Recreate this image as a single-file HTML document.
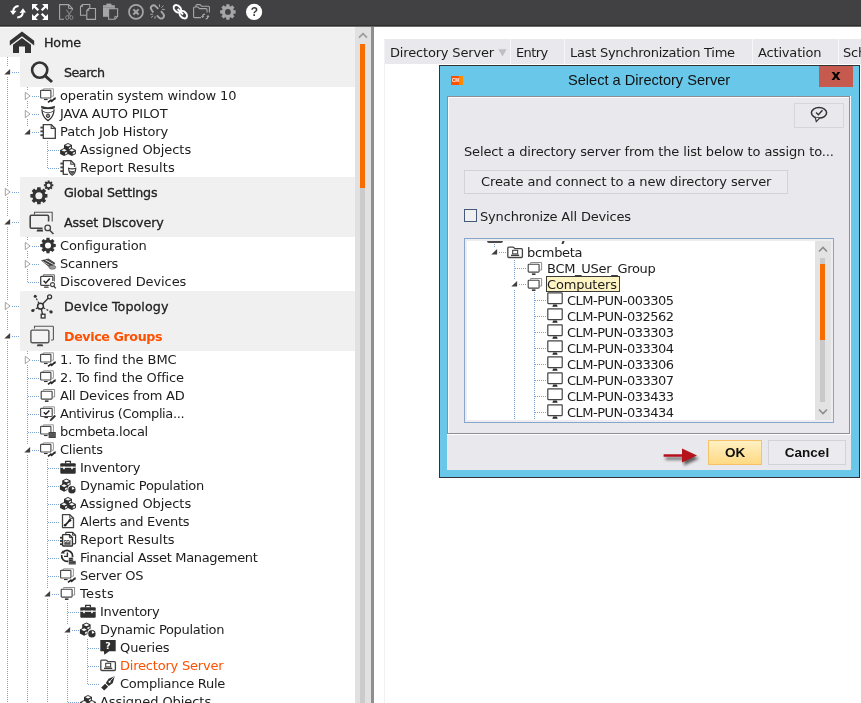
<!DOCTYPE html><html><head><meta charset="utf-8"><title>Select a Directory Server</title><style>
html,body{margin:0;padding:0}
body{width:861px;height:703px;position:relative;overflow:hidden;background:#fff;font-family:"DejaVu Sans","Liberation Sans",sans-serif;font-size:13px;color:#1e1e1e}
.a{position:absolute}
.t{position:absolute;white-space:nowrap;line-height:18px;height:18px;font-size:13px;letter-spacing:-0.17px;color:#1c1c1c}
.h{position:absolute;white-space:nowrap;line-height:30px;height:30px;font-size:12.7px;color:#222;-webkit-text-stroke:0.3px #222}
.h.or{font-weight:bold;-webkit-text-stroke:0;color:#fe5000}
.hb{position:absolute;left:20px;width:335px;height:30px;background:#f0f0f0}
.or{color:#fe5000}
.vl{position:absolute;width:1px;background:repeating-linear-gradient(to bottom,#7ba3cf 0,#7ba3cf 1px,transparent 1px,transparent 2px)}
.hl{position:absolute;height:1px;background:repeating-linear-gradient(to right,#7ba3cf 0,#7ba3cf 1px,transparent 1px,transparent 2px)}
svg{position:absolute;overflow:visible}
.tc{position:absolute;width:9px;height:10px;background:#fff}
</style></head><body><div id="root" style="position:absolute;left:0;top:0;width:861px;height:703px;will-change:transform">
<div class="a" style="left:0;top:0;width:861px;height:25px;background:#414143"></div>
<div class="a" style="left:0;top:25px;width:861px;height:1px;background:#2f2f31"></div>
<div class="a" style="left:0;top:26px;width:861px;height:1px;background:#6d6d6e"></div>
<div class="a" style="left:0;top:27px;width:355px;height:30px;background:#f0f0f0;border-top:1px solid #fafafa;box-sizing:border-box"></div>
<div class="hb" style="top:57px"></div>
<div class="hb" style="top:177px"></div>
<div class="hb" style="top:207px"></div>
<div class="hb" style="top:291px"></div>
<div class="hb" style="top:321px"></div>
<div class="a" style="left:355px;top:27px;width:16px;height:676px;background:#e1e1e1"></div>
<div class="a" style="left:360px;top:44px;width:5px;height:659px;background:#cbcbcb"></div>
<div class="a" style="left:360px;top:44px;width:5px;height:144px;background:#f86c00"></div>
<svg style="left:357px;top:31px" width="12" height="8" viewBox="0 0 12 8"><path d="M2 6.6L6 2.6L10 6.6" fill="none" stroke="#9a9a9a" stroke-width="1.6"/></svg>
<div class="a" style="left:371px;top:27px;width:3px;height:676px;background:#8f8f8f"></div>
<div class="h " style="left:44px;top:28px;letter-spacing:-0.166px">Home</div>
<div class="h " style="left:64px;top:58px;letter-spacing:-0.5px">Search</div>
<div class="h " style="left:64px;top:178px;letter-spacing:-0.215px">Global Settings</div>
<div class="h " style="left:64px;top:208px;letter-spacing:-0.114px">Asset Discovery</div>
<div class="h " style="left:64px;top:292px;letter-spacing:0.071px">Device Topology</div>
<div class="h or" style="left:64px;top:322px;letter-spacing:-0.401px">Device Groups</div>
<div class="vl" style="left:7px;top:57px;height:646px"></div>
<div class="hl" style="top:72px;left:12px;width:7px"></div>
<div class="tc" style="left:3px;top:67px"></div>
<svg style="left:3px;top:67px" width="9" height="10" viewBox="0 0 9 10"><path d="M1.3 7.5H7.1V2.1Z" fill="#3e3e3e"/></svg>
<div class="hl" style="top:192px;left:12px;width:7px"></div>
<div class="tc" style="left:3px;top:187px"></div>
<svg style="left:3px;top:187px" width="9" height="10" viewBox="0 0 9 10"><path d="M2.3 1.3L7.1 5L2.3 8.7Z" fill="#fff" stroke="#a2a2a2" stroke-width="1"/></svg>
<div class="hl" style="top:222px;left:12px;width:7px"></div>
<div class="tc" style="left:3px;top:217px"></div>
<svg style="left:3px;top:217px" width="9" height="10" viewBox="0 0 9 10"><path d="M1.3 7.5H7.1V2.1Z" fill="#3e3e3e"/></svg>
<div class="hl" style="top:306px;left:12px;width:7px"></div>
<div class="tc" style="left:3px;top:301px"></div>
<svg style="left:3px;top:301px" width="9" height="10" viewBox="0 0 9 10"><path d="M2.3 1.3L7.1 5L2.3 8.7Z" fill="#fff" stroke="#a2a2a2" stroke-width="1"/></svg>
<div class="hl" style="top:336px;left:12px;width:7px"></div>
<div class="tc" style="left:3px;top:331px"></div>
<svg style="left:3px;top:331px" width="9" height="10" viewBox="0 0 9 10"><path d="M1.3 7.5H7.1V2.1Z" fill="#3e3e3e"/></svg>
<div class="vl" style="left:27px;top:87px;height:46px"></div>
<div class="vl" style="left:47px;top:141px;height:28px"></div>
<div class="vl" style="left:27px;top:237px;height:46px"></div>
<div class="vl" style="left:27px;top:351px;height:352px"></div>
<div class="vl" style="left:47px;top:459px;height:244px"></div>
<div class="vl" style="left:67px;top:603px;height:100px"></div>
<div class="vl" style="left:87px;top:639px;height:46px"></div>
<div class="hl" style="top:96px;left:32px;width:8px"></div>
<div class="tc" style="left:23px;top:91px"></div>
<svg style="left:23px;top:91px" width="9" height="10" viewBox="0 0 9 10"><path d="M2.3 1.3L7.1 5L2.3 8.7Z" fill="#fff" stroke="#a2a2a2" stroke-width="1"/></svg>
<svg style="left:40px;top:88px" width="16" height="16" viewBox="0 0 16 16"><path d="M3.5 1.8V0.8H13.4V8.2H11.6" fill="none" stroke="#9a9a9a" stroke-width="1"/><path d="M2.5 2V1.4" fill="none" stroke="#bbb" stroke-width="1"/><rect x="0.6" y="2.4" width="10.3" height="7.6" rx="0.7" fill="#fff" stroke="#4a4a4a" stroke-width="1.15"/><rect x="4" y="11" width="3.6" height="1.1" fill="#333"/><path d="M8 14.4L10.9 12.1L11.7 13.2L14.6 10.6" fill="none" stroke="#222" stroke-width="1.7"/><path d="M15.9 9.3L15.4 12L13.3 9.9Z" fill="#222"/></svg>
<div class="t " style="left:60px;top:87px;letter-spacing:-0.137px">operatin system window 10</div>
<div class="hl" style="top:114px;left:32px;width:8px"></div>
<div class="tc" style="left:23px;top:109px"></div>
<svg style="left:23px;top:109px" width="9" height="10" viewBox="0 0 9 10"><path d="M2.3 1.3L7.1 5L2.3 8.7Z" fill="#fff" stroke="#a2a2a2" stroke-width="1"/></svg>
<svg style="left:40px;top:106px" width="16" height="16" viewBox="0 0 16 16"><path d="M1.1 -0.3Q8 2.6 14.9 -0.3L14.7 2.3Q8 5.4 1.3 2.3Z" fill="#333"/><path d="M1.9 3.2Q2.2 11 8 14.6Q13.8 11 14.1 3.2" fill="#fff" stroke="#333" stroke-width="1.3"/><path d="M2.6 5.2Q8 8.4 13.4 5.2" fill="none" stroke="#555" stroke-width="1"/><circle cx="8" cy="9.8" r="1.7" fill="#999" stroke="#333" stroke-width="1"/></svg>
<div class="t " style="left:60px;top:105px;letter-spacing:-0.178px">JAVA AUTO PILOT</div>
<div class="hl" style="top:132px;left:32px;width:8px"></div>
<div class="tc" style="left:23px;top:127px"></div>
<svg style="left:23px;top:127px" width="9" height="10" viewBox="0 0 9 10"><path d="M1.3 7.5H7.1V2.1Z" fill="#3e3e3e"/></svg>
<svg style="left:40px;top:124px" width="16" height="16" viewBox="0 0 16 16"><path d="M3.3 0.6H11.2L15.3 4.4V14.4H3.3Z" fill="#fff" stroke="#444" stroke-width="1.4" stroke-linejoin="round"/><path d="M11.2 0.6V4.4H15.3" fill="none" stroke="#444" stroke-width="1.1"/><rect x="0.4" y="2.6" width="2.6" height="1.9" fill="#444"/><rect x="0.4" y="6.4" width="2.6" height="1.9" fill="#444"/><rect x="0.4" y="10.2" width="2.6" height="1.9" fill="#444"/></svg>
<div class="t " style="left:60px;top:123px;letter-spacing:-0.125px">Patch Job History</div>
<div class="hl" style="top:150px;left:48px;width:12px"></div>
<svg style="left:60px;top:142px" width="16" height="16" viewBox="0 0 16 16"><path d="M8 0.8999999999999999L12.0 2.9V6.9L8 8.899999999999999L4.0 6.9V2.9Z" fill="#2f2f2f"/><path d="M8 1.9L10.7 3.1999999999999997L8 4.5L5.3 3.1999999999999997Z" fill="#fff"/><path d="M8.9 5.7L11.1 4.6V6.3L8.9 7.5Z" fill="#e8e8e8"/><path d="M4.1 6.0L8.1 8.0V12.0L4.1 14.0L0.09999999999999964 12.0V8.0Z" fill="#2f2f2f"/><path d="M4.1 7.0L6.8 8.3L4.1 9.6L1.3999999999999995 8.3Z" fill="#fff"/><path d="M5.0 10.8L7.199999999999999 9.700000000000001V11.4L5.0 12.600000000000001Z" fill="#e8e8e8"/><path d="M11.9 6.0L15.9 8.0V12.0L11.9 14.0L7.9 12.0V8.0Z" fill="#2f2f2f"/><path d="M11.9 7.0L14.600000000000001 8.3L11.9 9.6L9.2 8.3Z" fill="#fff"/><path d="M12.8 10.8L15.0 9.700000000000001V11.4L12.8 12.600000000000001Z" fill="#e8e8e8"/></svg>
<div class="t " style="left:80px;top:141px;letter-spacing:-0.057px">Assigned Objects</div>
<div class="hl" style="top:168px;left:48px;width:12px"></div>
<svg style="left:60px;top:160px" width="16" height="16" viewBox="0 0 16 16"><path d="M8 14.4H3.3V0.6H10.8L14.6 4.2V7" fill="#fff" stroke="#444" stroke-width="1.4" stroke-linejoin="round"/><path d="M10.8 0.6V4.2H14.6" fill="none" stroke="#444" stroke-width="1.1"/><rect x="0.4" y="2.6" width="2.6" height="1.9" fill="#444"/><rect x="0.4" y="6.4" width="2.6" height="1.9" fill="#444"/><rect x="0.4" y="10.2" width="2.6" height="1.9" fill="#444"/><path d="M8.6 8.2Q12.2 9.6 15.8 8.2Q15.6 13.4 12.2 15.2Q8.8 13.4 8.6 8.2Z" fill="#fff" stroke="#333" stroke-width="1.1"/><path d="M9.6 10.4Q12.2 11.4 14.8 10.4Q14.4 13 12.2 14.2Q10 13 9.6 10.4Z" fill="#555"/></svg>
<div class="t " style="left:80px;top:159px;letter-spacing:0.037px">Report Results</div>
<div class="hl" style="top:246px;left:32px;width:8px"></div>
<div class="tc" style="left:23px;top:241px"></div>
<svg style="left:23px;top:241px" width="9" height="10" viewBox="0 0 9 10"><path d="M2.3 1.3L7.1 5L2.3 8.7Z" fill="#fff" stroke="#a2a2a2" stroke-width="1"/></svg>
<svg style="left:40px;top:238px" width="16" height="16" viewBox="0 0 16 16"><path fill-rule="evenodd" fill="#333" d="M13.74 5.76 L15.75 5.96 L15.75 9.04 L13.74 9.24 L13.29 10.33 L14.57 11.89 L12.39 14.07 L10.83 12.79 L9.74 13.24 L9.54 15.25 L6.46 15.25 L6.26 13.24 L5.17 12.79 L3.61 14.07 L1.43 11.89 L2.71 10.33 L2.26 9.24 L0.25 9.04 L0.25 5.96 L2.26 5.76 L2.71 4.67 L1.43 3.11 L3.61 0.93 L5.17 2.21 L6.26 1.76 L6.46 -0.25 L9.54 -0.25 L9.74 1.76 L10.83 2.21 L12.39 0.93 L14.57 3.11 L13.29 4.67Z M11.00 7.50 A3.0 3.0 0 1 0 5.00 7.50 A3.0 3.0 0 1 0 11.00 7.50Z"/></svg>
<div class="t " style="left:60px;top:237px;letter-spacing:-0.122px">Configuration</div>
<div class="hl" style="top:264px;left:32px;width:8px"></div>
<div class="tc" style="left:23px;top:259px"></div>
<svg style="left:23px;top:259px" width="9" height="10" viewBox="0 0 9 10"><path d="M2.3 1.3L7.1 5L2.3 8.7Z" fill="#fff" stroke="#a2a2a2" stroke-width="1"/></svg>
<svg style="left:40px;top:256px" width="16" height="16" viewBox="0 0 16 16"><g transform="translate(0,2.4)"><path d="M1 2.2L4.2 1L13.6 6.2L12.6 8.2L9 8.6Z" fill="#3a3a3a"/><path d="M4.6 0.8L8.6 0.2L15.2 4.6L14.4 6.4Z" fill="#4a4a4a"/><path d="M2.4 2.8L9.4 6.8M5.6 1.8L12.8 5.8" stroke="#ddd" stroke-width="0.8"/><ellipse cx="12.4" cy="8.9" rx="3.4" ry="1.9" fill="#999" stroke="#666" stroke-width="0.8"/></g></svg>
<div class="t " style="left:60px;top:255px;letter-spacing:-0.229px">Scanners</div>
<div class="hl" style="top:282px;left:28px;width:12px"></div>
<svg style="left:40px;top:274px" width="16" height="16" viewBox="0 0 16 16"><path d="M3.4 2V0.8H14.4V7.6" fill="none" stroke="#666" stroke-width="1"/><path d="M12.9 7V3.2Q12.9 2.4 12.1 2.4H1.5Q0.7 2.4 0.7 3.2V10.6Q0.7 11.4 1.5 11.4H9.6" fill="#fff" stroke="#444" stroke-width="1.3"/><path d="M3.6 6.8L5.8 9L9.8 4.6" fill="none" stroke="#222" stroke-width="1.5"/><path d="M4.4 12.6H8.2L8.8 13.8H3.8Z" fill="#333"/><circle cx="12.5" cy="10.6" r="2" fill="#fff" stroke="#444" stroke-width="1.1"/><path d="M13.9 12.2L15.8 14.4" stroke="#444" stroke-width="1.4"/></svg>
<div class="t " style="left:60px;top:273px;letter-spacing:-0.091px">Discovered Devices</div>
<div class="hl" style="top:360px;left:32px;width:8px"></div>
<div class="tc" style="left:23px;top:355px"></div>
<svg style="left:23px;top:355px" width="9" height="10" viewBox="0 0 9 10"><path d="M2.3 1.3L7.1 5L2.3 8.7Z" fill="#fff" stroke="#a2a2a2" stroke-width="1"/></svg>
<svg style="left:40px;top:352px" width="16" height="16" viewBox="0 0 16 16"><path d="M3.5 1.8V0.8H13.4V8.2H11.6" fill="none" stroke="#9a9a9a" stroke-width="1"/><path d="M2.5 2V1.4" fill="none" stroke="#bbb" stroke-width="1"/><rect x="0.6" y="2.4" width="10.3" height="7.6" rx="0.7" fill="#fff" stroke="#4a4a4a" stroke-width="1.15"/><rect x="4" y="11" width="3.6" height="1.1" fill="#333"/><path d="M8 14.4L10.9 12.1L11.7 13.2L14.6 10.6" fill="none" stroke="#222" stroke-width="1.7"/><path d="M15.9 9.3L15.4 12L13.3 9.9Z" fill="#222"/></svg>
<div class="t " style="left:60px;top:351px;letter-spacing:-0.073px">1. To find the BMC</div>
<div class="hl" style="top:378px;left:28px;width:12px"></div>
<svg style="left:40px;top:370px" width="16" height="16" viewBox="0 0 16 16"><path d="M3.5 1.8V0.8H13.4V8.2H11.6" fill="none" stroke="#9a9a9a" stroke-width="1"/><path d="M2.5 2V1.4" fill="none" stroke="#bbb" stroke-width="1"/><rect x="0.6" y="2.4" width="10.3" height="7.6" rx="0.7" fill="#fff" stroke="#4a4a4a" stroke-width="1.15"/><rect x="4" y="11" width="3.6" height="1.1" fill="#333"/><path d="M8 14.4L10.9 12.1L11.7 13.2L14.6 10.6" fill="none" stroke="#222" stroke-width="1.7"/><path d="M15.9 9.3L15.4 12L13.3 9.9Z" fill="#222"/></svg>
<div class="t " style="left:60px;top:369px;letter-spacing:-0.135px">2. To find the Office</div>
<div class="hl" style="top:396px;left:28px;width:12px"></div>
<svg style="left:40px;top:388px" width="16" height="16" viewBox="0 0 16 16"><path d="M3.6 2.6V1.5H14.6V9H13" fill="none" stroke="#8c8c8c" stroke-width="1"/><rect x="1.2" y="3.2" width="10.9" height="7.9" rx="0.8" fill="#fff" stroke="#444" stroke-width="1.15"/><rect x="4.9" y="12.4" width="3.6" height="1.5" fill="#2a2a2a"/></svg>
<div class="t " style="left:60px;top:387px;letter-spacing:-0.228px">All Devices from AD</div>
<div class="hl" style="top:414px;left:28px;width:12px"></div>
<svg style="left:40px;top:406px" width="16" height="16" viewBox="0 0 16 16"><path d="M3.5 1.8V0.8H14.4V8" fill="none" stroke="#9a9a9a" stroke-width="1"/><rect x="0.6" y="2.3" width="11.6" height="8.2" rx="0.8" fill="#fff" stroke="#4f4f4f" stroke-width="1.2"/><path d="M3.8 6.2L5.8 8.2L9.4 4.4" fill="none" stroke="#222" stroke-width="1.5"/><rect x="4.4" y="11" width="3.6" height="1.1" fill="#333"/><path d="M14.6 8.8L16 10.2L11.8 14.4L9.6 15.2L10.4 13Z" fill="#333"/></svg>
<div class="t " style="left:60px;top:405px;letter-spacing:-0.385px">Antivirus (Complia...</div>
<div class="hl" style="top:432px;left:28px;width:12px"></div>
<svg style="left:40px;top:424px" width="16" height="16" viewBox="0 0 16 16"><path d="M3.5 1.8V0.8H13.4V8" fill="none" stroke="#9a9a9a" stroke-width="1"/><rect x="0.6" y="2.4" width="10.3" height="7.6" rx="0.7" fill="#fff" stroke="#4a4a4a" stroke-width="1.15"/><rect x="4" y="11" width="3.6" height="1.1" fill="#333"/><rect x="8.6" y="8" width="7.2" height="6" fill="#444"/><path d="M9.4 10H15M9.4 12H15" stroke="#777" stroke-width="0.7"/></svg>
<div class="t " style="left:60px;top:423px;letter-spacing:-0.302px">bcmbeta.local</div>
<div class="hl" style="top:450px;left:32px;width:8px"></div>
<div class="tc" style="left:23px;top:445px"></div>
<svg style="left:23px;top:445px" width="9" height="10" viewBox="0 0 9 10"><path d="M1.3 7.5H7.1V2.1Z" fill="#3e3e3e"/></svg>
<svg style="left:40px;top:442px" width="16" height="16" viewBox="0 0 16 16"><path d="M3.5 1.8V0.8H13.4V8.2H11.6" fill="none" stroke="#9a9a9a" stroke-width="1"/><path d="M2.5 2V1.4" fill="none" stroke="#bbb" stroke-width="1"/><rect x="0.6" y="2.4" width="10.3" height="7.6" rx="0.7" fill="#fff" stroke="#4a4a4a" stroke-width="1.15"/><rect x="4" y="11" width="3.6" height="1.1" fill="#333"/><path d="M8 14.4L10.9 12.1L11.7 13.2L14.6 10.6" fill="none" stroke="#222" stroke-width="1.7"/><path d="M15.9 9.3L15.4 12L13.3 9.9Z" fill="#222"/></svg>
<div class="t " style="left:60px;top:441px;letter-spacing:-0.235px">Clients</div>
<div class="hl" style="top:468px;left:48px;width:12px"></div>
<svg style="left:60px;top:460px" width="16" height="16" viewBox="0 0 16 16"><path d="M5.6 3.4V1.4H10.4V3.4" fill="none" stroke="#333" stroke-width="1.3"/><rect x="0.3" y="3.2" width="15.4" height="10.6" rx="1" fill="#2f2f2f"/><rect x="0.3" y="6.6" width="15.4" height="1.2" fill="#fff"/><rect x="3.2" y="6.6" width="1.6" height="2.6" fill="#fff"/><rect x="11.2" y="6.6" width="1.6" height="2.6" fill="#fff"/></svg>
<div class="t " style="left:80px;top:459px;letter-spacing:-0.22px">Inventory</div>
<div class="hl" style="top:486px;left:48px;width:12px"></div>
<svg style="left:60px;top:478px" width="16" height="16" viewBox="0 0 16 16"><path d="M6.4 0.5049999999999999L10.600000000000001 2.6049999999999995V6.805L6.4 8.905L2.2 6.805V2.6049999999999995Z" fill="#2f2f2f"/><path d="M6.4 1.5549999999999997L9.235000000000001 2.9199999999999995L6.4 4.284999999999999L3.565 2.9199999999999995Z" fill="#fff"/><path d="M7.345000000000001 5.545L9.655000000000001 4.39V6.175L7.345000000000001 7.4350000000000005Z" fill="#e8e8e8"/><path d="M4.1 5.305000000000001L8.3 7.405V11.605L4.1 13.705L-0.10000000000000053 11.605V7.405Z" fill="#2f2f2f"/><path d="M4.1 6.355L6.9350000000000005 7.720000000000001L4.1 9.085L1.2649999999999992 7.720000000000001Z" fill="#fff"/><path d="M5.045 10.345L7.355 9.19V10.975000000000001L5.045 12.235000000000001Z" fill="#e8e8e8"/><circle cx="11.9" cy="11.8" r="4.1" fill="#2f2f2f" stroke="#fff" stroke-width="0.8"/><path d="M11.9 11.8V8.9A2.9 2.9 0 0 1 14.6 10.7Z" fill="#fff"/></svg>
<div class="t " style="left:80px;top:477px;letter-spacing:-0.326px">Dynamic Population</div>
<div class="hl" style="top:504px;left:48px;width:12px"></div>
<svg style="left:60px;top:496px" width="16" height="16" viewBox="0 0 16 16"><path d="M8 0.8999999999999999L12.0 2.9V6.9L8 8.899999999999999L4.0 6.9V2.9Z" fill="#2f2f2f"/><path d="M8 1.9L10.7 3.1999999999999997L8 4.5L5.3 3.1999999999999997Z" fill="#fff"/><path d="M8.9 5.7L11.1 4.6V6.3L8.9 7.5Z" fill="#e8e8e8"/><path d="M4.1 6.0L8.1 8.0V12.0L4.1 14.0L0.09999999999999964 12.0V8.0Z" fill="#2f2f2f"/><path d="M4.1 7.0L6.8 8.3L4.1 9.6L1.3999999999999995 8.3Z" fill="#fff"/><path d="M5.0 10.8L7.199999999999999 9.700000000000001V11.4L5.0 12.600000000000001Z" fill="#e8e8e8"/><path d="M11.9 6.0L15.9 8.0V12.0L11.9 14.0L7.9 12.0V8.0Z" fill="#2f2f2f"/><path d="M11.9 7.0L14.600000000000001 8.3L11.9 9.6L9.2 8.3Z" fill="#fff"/><path d="M12.8 10.8L15.0 9.700000000000001V11.4L12.8 12.600000000000001Z" fill="#e8e8e8"/></svg>
<div class="t " style="left:80px;top:495px;letter-spacing:-0.057px">Assigned Objects</div>
<div class="hl" style="top:522px;left:48px;width:12px"></div>
<svg style="left:60px;top:514px" width="16" height="16" viewBox="0 0 16 16"><path d="M2.5 0.7H9.8L13.5 4.3V13.7H2.5Z" fill="#fff" stroke="#444" stroke-width="1.3" stroke-linejoin="round"/><path d="M9.8 0.7V4.3H13.5" fill="none" stroke="#444" stroke-width="1"/><path d="M5.2 11.2L9.8 6.4" stroke="#222" stroke-width="1.7" stroke-linecap="round"/><circle cx="9.9" cy="6.3" r="1.4" fill="#222"/><circle cx="5.1" cy="11.3" r="1.3" fill="#222"/></svg>
<div class="t " style="left:80px;top:513px;letter-spacing:-0.313px">Alerts and Events</div>
<div class="hl" style="top:540px;left:48px;width:12px"></div>
<svg style="left:60px;top:532px" width="16" height="16" viewBox="0 0 16 16"><path d="M5.8 2V0.7Q5.8 0.3 6.4 0.3H12.6L15.6 3.2V11Q15.6 11.8 14.8 11.8H13" fill="none" stroke="#3a3a3a" stroke-width="1.2"/><path d="M12.6 0.3V3.2H15.6" fill="none" stroke="#3a3a3a" stroke-width="1"/><path d="M2.6 3.2Q2.6 2.6 3.2 2.6H9.4L12.4 5.6V13.4Q12.4 14 11.8 14H3.2Q2.6 14 2.6 13.4Z" fill="#fff" stroke="#333" stroke-width="1.4"/><path d="M9.4 2.6V5.6H12.4" fill="none" stroke="#333" stroke-width="1"/><rect x="0" y="4.8" width="2" height="1.8" fill="#333"/><rect x="0" y="8.1" width="2" height="1.8" fill="#333"/><rect x="0" y="11.3" width="2" height="1.8" fill="#333"/><rect x="4.2" y="8" width="6.4" height="4.8" fill="#555"/><path d="M4.6 10.2L6.4 9L8 10.2L10.2 8.2" fill="none" stroke="#fff" stroke-width="0.9"/></svg>
<div class="t " style="left:80px;top:531px;letter-spacing:0.032px">Report Results</div>
<div class="hl" style="top:558px;left:48px;width:12px"></div>
<svg style="left:60px;top:550px" width="16" height="16" viewBox="0 0 16 16"><path d="M3.4 1.9A5.5 5.5 0 1 1 1.7 5" fill="none" stroke="#2c2c2c" stroke-width="1.7"/><path d="M0.6 3.4L3 0.2L4.8 3.6Z" fill="#2c2c2c"/><path d="M7.4 2.6V6.4H4" fill="none" stroke="#2c2c2c" stroke-width="1.4"/><path d="M8.6 7.4H13.2V10.8H16V14.8H8.6Z" fill="#2c2c2c" stroke="#fff" stroke-width="0.6"/><path d="M9.4 9.4H12.6M9.4 11.4H12.6M9.4 13.2H15.4" stroke="#999" stroke-width="0.6"/></svg>
<div class="t " style="left:80px;top:549px;letter-spacing:-0.342px">Financial Asset Management</div>
<div class="hl" style="top:576px;left:48px;width:12px"></div>
<svg style="left:60px;top:568px" width="16" height="16" viewBox="0 0 16 16"><path d="M3.5 1.8V0.8H13.4V8.2H11.6" fill="none" stroke="#9a9a9a" stroke-width="1"/><path d="M2.5 2V1.4" fill="none" stroke="#bbb" stroke-width="1"/><rect x="0.6" y="2.4" width="10.3" height="7.6" rx="0.7" fill="#fff" stroke="#4a4a4a" stroke-width="1.15"/><rect x="4" y="11" width="3.6" height="1.1" fill="#333"/><path d="M8 14.4L10.9 12.1L11.7 13.2L14.6 10.6" fill="none" stroke="#222" stroke-width="1.7"/><path d="M15.9 9.3L15.4 12L13.3 9.9Z" fill="#222"/></svg>
<div class="t " style="left:80px;top:567px;letter-spacing:-0.22px">Server OS</div>
<div class="hl" style="top:594px;left:52px;width:8px"></div>
<div class="tc" style="left:43px;top:589px"></div>
<svg style="left:43px;top:589px" width="9" height="10" viewBox="0 0 9 10"><path d="M1.3 7.5H7.1V2.1Z" fill="#3e3e3e"/></svg>
<svg style="left:60px;top:586px" width="16" height="16" viewBox="0 0 16 16"><path d="M3.6 2.6V1.5H14.6V9H13" fill="none" stroke="#8c8c8c" stroke-width="1"/><rect x="1.2" y="3.2" width="10.9" height="7.9" rx="0.8" fill="#fff" stroke="#444" stroke-width="1.15"/><rect x="4.9" y="12.4" width="3.6" height="1.5" fill="#2a2a2a"/></svg>
<div class="t " style="left:80px;top:585px;letter-spacing:0.355px">Tests</div>
<div class="hl" style="top:612px;left:68px;width:12px"></div>
<svg style="left:80px;top:604px" width="16" height="16" viewBox="0 0 16 16"><path d="M5.6 3.4V1.4H10.4V3.4" fill="none" stroke="#333" stroke-width="1.3"/><rect x="0.3" y="3.2" width="15.4" height="10.6" rx="1" fill="#2f2f2f"/><rect x="0.3" y="6.6" width="15.4" height="1.2" fill="#fff"/><rect x="3.2" y="6.6" width="1.6" height="2.6" fill="#fff"/><rect x="11.2" y="6.6" width="1.6" height="2.6" fill="#fff"/></svg>
<div class="t " style="left:100px;top:603px;letter-spacing:-0.312px">Inventory</div>
<div class="hl" style="top:630px;left:72px;width:8px"></div>
<div class="tc" style="left:63px;top:625px"></div>
<svg style="left:63px;top:625px" width="9" height="10" viewBox="0 0 9 10"><path d="M1.3 7.5H7.1V2.1Z" fill="#3e3e3e"/></svg>
<svg style="left:80px;top:622px" width="16" height="16" viewBox="0 0 16 16"><path d="M6.4 0.5049999999999999L10.600000000000001 2.6049999999999995V6.805L6.4 8.905L2.2 6.805V2.6049999999999995Z" fill="#2f2f2f"/><path d="M6.4 1.5549999999999997L9.235000000000001 2.9199999999999995L6.4 4.284999999999999L3.565 2.9199999999999995Z" fill="#fff"/><path d="M7.345000000000001 5.545L9.655000000000001 4.39V6.175L7.345000000000001 7.4350000000000005Z" fill="#e8e8e8"/><path d="M4.1 5.305000000000001L8.3 7.405V11.605L4.1 13.705L-0.10000000000000053 11.605V7.405Z" fill="#2f2f2f"/><path d="M4.1 6.355L6.9350000000000005 7.720000000000001L4.1 9.085L1.2649999999999992 7.720000000000001Z" fill="#fff"/><path d="M5.045 10.345L7.355 9.19V10.975000000000001L5.045 12.235000000000001Z" fill="#e8e8e8"/><circle cx="11.9" cy="11.8" r="4.1" fill="#2f2f2f" stroke="#fff" stroke-width="0.8"/><path d="M11.9 11.8V8.9A2.9 2.9 0 0 1 14.6 10.7Z" fill="#fff"/></svg>
<div class="t " style="left:100px;top:621px;letter-spacing:-0.317px">Dynamic Population</div>
<div class="hl" style="top:648px;left:88px;width:12px"></div>
<svg style="left:100px;top:640px" width="16" height="16" viewBox="0 0 16 16"><path d="M0.3 0H15.7V11.2H9.2L4.4 14.8L3.8 11.2H0.3Z" fill="#2f2f2f"/></svg>
<div class="t " style="left:120px;top:639px;letter-spacing:-0.105px">Queries</div>
<div class="hl" style="top:666px;left:88px;width:12px"></div>
<svg style="left:100px;top:658px" width="16" height="16" viewBox="0 0 16 16"><path d="M0.8 9.4V0.9Q0.8 0 1.7 0H5.8Q6.6 0 7.2 0.8L7.8 1.6H14.4Q15.4 1.6 15.4 2.6V9.4Q15.4 10.4 14.4 10.4H1.8Q0.8 10.4 0.8 9.4Z" transform="translate(0,2.1)" fill="#fff" stroke="#444" stroke-width="1.3"/><rect x="5.7" y="5.3" width="5" height="3.6" fill="#fff" stroke="#333" stroke-width="1"/><path d="M4 10.3H12.2" stroke="#333" stroke-width="1.3"/></svg>
<div class="t or" style="left:120px;top:657px;letter-spacing:-0.203px">Directory Server</div>
<div class="hl" style="top:684px;left:88px;width:12px"></div>
<svg style="left:100px;top:676px" width="16" height="16" viewBox="0 0 16 16"><g transform="translate(-0.8,0.6)"><path d="M15.6 -0.6L9.4 2.2L6.6 6.4L9.6 9.4L13.6 6.4Z" fill="#2f2f2f"/><path d="M15.4 -0.4L10.6 4.8" stroke="#fff" stroke-width="0.8"/><circle cx="10.4" cy="5.2" r="1.1" fill="#fff"/><path d="M5.9 7.1L8.9 10.1L5 14L2 11Z" fill="#2f2f2f"/></g></svg>
<div class="t " style="left:120px;top:675px;letter-spacing:-0.265px">Compliance Rule</div>
<div class="hl" style="top:702px;left:68px;width:12px"></div>
<svg style="left:80px;top:694px" width="16" height="16" viewBox="0 0 16 16"><path d="M8 0.8999999999999999L12.0 2.9V6.9L8 8.899999999999999L4.0 6.9V2.9Z" fill="#2f2f2f"/><path d="M8 1.9L10.7 3.1999999999999997L8 4.5L5.3 3.1999999999999997Z" fill="#fff"/><path d="M8.9 5.7L11.1 4.6V6.3L8.9 7.5Z" fill="#e8e8e8"/><path d="M4.1 6.0L8.1 8.0V12.0L4.1 14.0L0.09999999999999964 12.0V8.0Z" fill="#2f2f2f"/><path d="M4.1 7.0L6.8 8.3L4.1 9.6L1.3999999999999995 8.3Z" fill="#fff"/><path d="M5.0 10.8L7.199999999999999 9.700000000000001V11.4L5.0 12.600000000000001Z" fill="#e8e8e8"/><path d="M11.9 6.0L15.9 8.0V12.0L11.9 14.0L7.9 12.0V8.0Z" fill="#2f2f2f"/><path d="M11.9 7.0L14.600000000000001 8.3L11.9 9.6L9.2 8.3Z" fill="#fff"/><path d="M12.8 10.8L15.0 9.700000000000001V11.4L12.8 12.600000000000001Z" fill="#e8e8e8"/></svg>
<div class="t " style="left:100px;top:693px;letter-spacing:-0.058px">Assigned Objects</div>
<div class="a" style="left:100px;top:640px;width:16px;height:11px;line-height:11px;font-size:9.5px;font-weight:bold;color:#fff;text-align:center">?</div>
<svg style="left:0px;top:27px" width="40" height="30" viewBox="0 0 40 30"><path d="M22 4.6L34.2 13.8V18.4L22 9.2L9.8 18.4V13.8Z" fill="#333"/><path d="M22 10.9L31 17.7V26H25V19.6H19V26H13V17.7Z" fill="#333"/></svg>
<svg style="left:20px;top:57px" width="40" height="30" viewBox="0 0 40 30"><circle cx="19.7" cy="13.1" r="7.6" fill="none" stroke="#333" stroke-width="2.6"/><path d="M25.2 18.9L32 25" stroke="#333" stroke-width="3" stroke-linecap="butt"/></svg>
<svg style="left:20px;top:177px" width="40" height="30" viewBox="0 0 40 30"><path fill-rule="evenodd" fill="#333" d="M25.22 16.88 L27.43 17.10 L27.43 20.50 L25.22 20.72 L24.72 21.91 L26.13 23.63 L23.73 26.03 L22.01 24.62 L20.82 25.12 L20.60 27.33 L17.20 27.33 L16.98 25.12 L15.79 24.62 L14.07 26.03 L11.67 23.63 L13.08 21.91 L12.58 20.72 L10.37 20.50 L10.37 17.10 L12.58 16.88 L13.08 15.69 L11.67 13.97 L14.07 11.57 L15.79 12.98 L16.98 12.48 L17.20 10.27 L20.60 10.27 L20.82 12.48 L22.01 12.98 L23.73 11.57 L26.13 13.97 L24.72 15.69Z M22.40 18.80 A3.5 3.5 0 1 0 15.40 18.80 A3.5 3.5 0 1 0 22.40 18.80Z"/><path fill-rule="evenodd" fill="#333" d="M31.95 7.28 L33.31 7.36 L33.31 9.24 L31.95 9.32 L31.69 9.95 L32.59 10.97 L31.27 12.29 L30.25 11.39 L29.62 11.65 L29.54 13.01 L27.66 13.01 L27.58 11.65 L26.95 11.39 L25.93 12.29 L24.61 10.97 L25.51 9.95 L25.25 9.32 L23.89 9.24 L23.89 7.36 L25.25 7.28 L25.51 6.65 L24.61 5.63 L25.93 4.31 L26.95 5.21 L27.58 4.95 L27.66 3.59 L29.54 3.59 L29.62 4.95 L30.25 5.21 L31.27 4.31 L32.59 5.63 L31.69 6.65Z M30.50 8.30 A1.9 1.9 0 1 0 26.70 8.30 A1.9 1.9 0 1 0 30.50 8.30Z"/></svg>
<svg style="left:20px;top:207px" width="40" height="30" viewBox="0 0 40 30"><path d="M14.5 7.6V5.2H32.2V14.6" fill="none" stroke="#555" stroke-width="1.1"/><path d="M28.6 14.4V9.4Q28.6 8.2 27.4 8.2H11.4Q10.2 8.2 10.2 9.4V20Q10.2 21.2 11.4 21.2H22.6" fill="none" stroke="#444" stroke-width="1.6"/><path d="M17.2 22.6H22.6L23.2 24.4H16.6Z" fill="#333"/><circle cx="27.7" cy="20.9" r="2.8" fill="none" stroke="#444" stroke-width="1.3"/><path d="M29.8 23.2L33.4 27" stroke="#444" stroke-width="1.6"/></svg>
<svg style="left:20px;top:291px" width="40" height="30" viewBox="0 0 40 30"><path d="M20.5 15.2L29.6 5.8M20.5 15.2L23 25" stroke="#333" stroke-width="1.3"/><path d="M20.5 15.2L15.2 5.3M20.5 15.2L12.8 19.5M20.5 15.2L31.1 20.9" stroke="#333" stroke-width="1.2" stroke-dasharray="2 1.4"/><circle cx="20.5" cy="15.2" r="2.9" fill="#f0f0f0" stroke="#333" stroke-width="1.5"/><circle cx="29.6" cy="5.8" r="2" fill="#f0f0f0" stroke="#333" stroke-width="1.3"/><rect x="21.2" y="23.2" width="3.8" height="3.8" fill="#f0f0f0" stroke="#333" stroke-width="1.3"/><circle cx="15.2" cy="5.3" r="1.5" fill="#333"/><circle cx="12.8" cy="19.5" r="1.6" fill="#333"/><circle cx="31.1" cy="20.9" r="1.6" fill="#333"/></svg>
<svg style="left:20px;top:321px" width="40" height="30" viewBox="0 0 40 30"><path d="M14.5 7.4V5.2H32.6Q33.4 5.2 33.4 6V18.2Q33.4 19 32.6 19H31" fill="none" stroke="#555" stroke-width="1.1"/><rect x="10.9" y="9.1" width="18" height="12.6" rx="1.5" fill="#f4f4f4" stroke="#555" stroke-width="1.4"/><path d="M17.6 23.2H22.4L23.4 25.3H16.6Z" fill="#444"/></svg>
<svg style="left:0px;top:0px" width="30" height="26" viewBox="0 0 30 26"><path d="M18.6 5.9Q13.4 6.4 13.2 11.4" fill="none" stroke="#fff" stroke-width="2"/><path d="M10 10.7H16.5L13 15Z" fill="#fff"/><path d="M22.8 12.4Q22.6 17.2 17.2 17.5" fill="none" stroke="#fff" stroke-width="2"/><path d="M19.6 13.1L23 8.3L25.9 12.6Z" fill="#fff"/></svg>
<svg style="left:32px;top:4px" width="16" height="16" viewBox="0 0 16 16"><path d="M0 0H6L0 6ZM16 0V6L10 0ZM0 16V10L6 16ZM16 16H10L16 10Z" fill="#fff"/><path d="M2 2L6.3 6.3M14 2L9.7 6.3M2 14L6.3 9.7M14 14L9.7 9.7" stroke="#fff" stroke-width="2.3"/></svg>
<svg style="left:59px;top:4px" width="16" height="16" viewBox="0 0 16 16"><path d="M5 15.2H0.6V0.6H9.6L13.4 4.4V6" fill="none" stroke="#a6a6a6" stroke-width="1.1"/><path d="M9.6 0.6V4.4H13.4" fill="none" stroke="#a6a6a6" stroke-width="1"/><path d="M7.4 5.6L11.6 12.2M13.2 5.6L9 12.2" stroke="#7f7f7f" stroke-width="1.1"/><ellipse cx="8.2" cy="13.6" rx="1.5" ry="2" fill="none" stroke="#8a8a8a" stroke-width="1"/><ellipse cx="12.4" cy="13.6" rx="1.5" ry="2" fill="none" stroke="#8a8a8a" stroke-width="1"/></svg>
<svg style="left:80px;top:4px" width="16" height="16" viewBox="0 0 16 16"><path d="M6.4 11.2H0.5V2.4L2.4 0.5H9.8V4" fill="none" stroke="#a6a6a6" stroke-width="1.1"/><path d="M0.5 2.6H2.6V0.5" fill="none" stroke="#a6a6a6" stroke-width="0.9"/><path d="M6.8 15.4V6.4L8.6 4.5H15.5V15.4Z" fill="none" stroke="#a6a6a6" stroke-width="1.1"/><path d="M6.8 6.6H8.8V4.5" fill="none" stroke="#a6a6a6" stroke-width="0.9"/></svg>
<svg style="left:102px;top:3px" width="17" height="17" viewBox="0 0 17 17"><rect x="1" y="2.2" width="11.8" height="11.6" fill="#a6a6a6"/><rect x="4.4" y="0.6" width="5" height="2.6" fill="#a6a6a6"/><path d="M1 4.4H12.8" stroke="#8a8a8a" stroke-width="0.8"/><path d="M6.6 5.8H15.6V13.6L13 16.2H6.6Z" fill="#414143" stroke="#a6a6a6" stroke-width="1.1"/><path d="M15.6 13.4H12.8V16.2" fill="none" stroke="#a6a6a6" stroke-width="0.9"/></svg>
<svg style="left:128px;top:4px" width="16" height="16" viewBox="0 0 16 16"><circle cx="8" cy="7.9" r="7" fill="none" stroke="#a6a6a6" stroke-width="1.7"/><path d="M5.4 5.3L10.6 10.5M10.6 5.3L5.4 10.5" stroke="#a6a6a6" stroke-width="1.9"/></svg>
<svg style="left:150px;top:4px" width="16" height="16" viewBox="0 0 16 16"><path d="M3.3 8.5L1.3 5.6Q-0.1 3.4 1.9 1.9Q4 0.5 5.7 2.3L8.3 4.9" fill="none" stroke="#a6a6a6" stroke-width="1.9"/><path d="M6.8 11.3L9.3 13.8Q11 15.4 12.9 13.9Q15 12.2 13.4 10.1L11 7.2" fill="none" stroke="#a6a6a6" stroke-width="1.9"/><path d="M9.4 0.4L9.6 2.9M13.4 1.6L11.5 3.7M14.8 5.6L12 5.3M0.3 10.4L2.9 10.2M1 13.6L3.2 11.8M5 14.8L5 12.3" stroke="#a6a6a6" stroke-width="1"/></svg>
<svg style="left:172px;top:4px" width="16" height="16" viewBox="0 0 16 16"><ellipse cx="0" cy="0" rx="4.3" ry="3" transform="translate(5.4 4.8) rotate(45)" fill="none" stroke="#fff" stroke-width="2"/><ellipse cx="0" cy="0" rx="4.3" ry="3" transform="translate(11.3 10.7) rotate(45)" fill="none" stroke="#fff" stroke-width="2"/><path d="M5.6 5L11.1 10.5" stroke="#fff" stroke-width="1.8"/></svg>
<svg style="left:193px;top:4px" width="17" height="16" viewBox="0 0 17 16"><path d="M3 3V1.6Q3 0.6 4 0.6H7L8.6 2.2H15.4Q16.4 2.2 16.4 3.2V8.6" fill="none" stroke="#a6a6a6" stroke-width="1.1"/><path d="M8 13.6H1.6Q0.6 13.6 0.6 12.6V4Q0.6 3 1.6 3H5L6.6 4.6H13Q14 4.6 14 5.6V8.6" fill="none" stroke="#a6a6a6" stroke-width="1.1"/><path d="M12 10.2Q9.6 10.4 9.6 12.4" fill="none" stroke="#a6a6a6" stroke-width="1.2"/><path d="M8 12H11.2L9.6 14.2Z" fill="#a6a6a6"/><path d="M15 12.6Q15 14.8 12.6 15" fill="none" stroke="#a6a6a6" stroke-width="1.2"/><path d="M13.4 13L15 10.8L16.6 13Z" fill="#a6a6a6"/></svg>
<svg style="left:220px;top:4px" width="16" height="16" viewBox="0 0 16 16"><path fill-rule="evenodd" fill="#a6a6a6" d="M13.64 6.16 L15.65 6.36 L15.65 9.44 L13.64 9.64 L13.19 10.73 L14.47 12.29 L12.29 14.47 L10.73 13.19 L9.64 13.64 L9.44 15.65 L6.36 15.65 L6.16 13.64 L5.07 13.19 L3.51 14.47 L1.33 12.29 L2.61 10.73 L2.16 9.64 L0.15 9.44 L0.15 6.36 L2.16 6.16 L2.61 5.07 L1.33 3.51 L3.51 1.33 L5.07 2.61 L6.16 2.16 L6.36 0.15 L9.44 0.15 L9.64 2.16 L10.73 2.61 L12.29 1.33 L14.47 3.51 L13.19 5.07Z M10.80 7.90 A2.9 2.9 0 1 0 5.00 7.90 A2.9 2.9 0 1 0 10.80 7.90Z"/></svg>
<svg style="left:246px;top:3px" width="18" height="18" viewBox="0 0 18 18"><circle cx="8.1" cy="8.9" r="8.1" fill="#fff"/></svg>
<div class="a" style="left:246px;top:3px;width:17px;height:18px;line-height:18px;font-family:'Liberation Sans',sans-serif;font-weight:bold;font-size:12px;color:#3a3a3a;text-align:center">?</div>
<div class="a" style="left:385px;top:39px;width:476px;height:25px;background:#e9e9ed"></div>
<div class="t" style="left:390px;top:44px;letter-spacing:-0.17px">Directory Server</div>
<div class="t" style="left:516px;top:44px;letter-spacing:-0.6px">Entry</div>
<div class="t" style="left:570px;top:44px;letter-spacing:-0.26px">Last Synchronization Time</div>
<div class="t" style="left:758px;top:44px;letter-spacing:-0.17px">Activation</div>
<div class="t" style="left:843px;top:44px;letter-spacing:-0.17px">Sch</div>
<div class="a" style="left:510px;top:39px;width:1px;height:25px;background:#f7f7f9"></div>
<div class="a" style="left:564px;top:39px;width:1px;height:25px;background:#f7f7f9"></div>
<div class="a" style="left:752px;top:39px;width:1px;height:25px;background:#f7f7f9"></div>
<div class="a" style="left:838px;top:39px;width:1px;height:25px;background:#f7f7f9"></div>
<svg style="left:498px;top:49px" width="9" height="8" viewBox="0 0 9 8"><path d="M0.4 0.3H8.6L4.5 7.6Z" fill="#bfbfc3"/></svg>
<div class="a" style="left:384px;top:39px;width:1px;height:664px;background:#f1f1f3"></div>
<div class="a" style="left:439px;top:65px;width:421px;height:413px;background:#69c8ea;border:1px solid #303236;box-sizing:border-box"></div>
<div class="a" style="left:447px;top:96px;width:404px;height:374px;background:#e9e9ed"></div>
<div class="a" style="left:447px;top:96px;width:403px;height:338px;border:1px solid #8f8f93;box-sizing:border-box"></div>
<div class="a" style="left:447px;top:434px;width:404px;height:1px;background:#fff"></div>
<div class="a" style="left:448px;top:97px;width:401px;height:1px;background:#fbfbfd"></div>
<div class="a" style="left:448px;top:97px;width:1px;height:336px;background:#fbfbfd"></div>
<div class="a" style="left:850px;top:96px;width:1px;height:339px;background:#f8f8fa"></div>
<div class="a" style="left:568px;top:70px;font-family:'Liberation Sans',sans-serif;font-size:14.6px;line-height:20px;color:#111;white-space:nowrap">Select a Directory Server</div>
<div class="a" style="left:819px;top:66px;width:34px;height:21px;background:#c75a4f;color:#000;font-weight:bold;font-size:14.5px;line-height:19px;text-align:center">x</div>
<div class="a" style="left:451px;top:76px;width:12px;height:9px;background:linear-gradient(to right,#ff5000 0,#ff5000 8px,#ff8a00 8px)"></div>
<div class="a" style="left:451px;top:77px;width:9px;height:7px;line-height:7px;font-family:'Liberation Sans',sans-serif;font-size:4.5px;font-weight:bold;color:#fff;text-align:center">CM</div>
<div class="a" style="left:794px;top:103px;width:50px;height:25px;border:1px solid #d6d6da;box-sizing:border-box;background:#e9e9ed"></div>
<svg style="left:809px;top:105px" width="20" height="18" viewBox="0 0 20 18"><ellipse cx="10" cy="7.8" rx="7.6" ry="5.3" fill="none" stroke="#333" stroke-width="1.5"/><path d="M6.2 12.4L7.3 16.6L10.6 13.2" fill="#e9e9ed" stroke="#333" stroke-width="1.2"/><path d="M7 7.5L9.4 9.7L13.5 5.2" fill="none" stroke="#333" stroke-width="1.4"/></svg>
<div class="t" style="left:464px;top:143px;letter-spacing:-0.13px">Select a directory server from the list below to assign to...</div>
<div class="a" style="left:464px;top:170px;width:324px;height:24px;border:1px solid #d3d3d7;box-sizing:border-box;background:#ebebef"></div>
<div class="t" style="left:481px;top:173px;letter-spacing:-0.12px">Create and connect to a new directory server</div>
<div class="a" style="left:464px;top:209px;width:13px;height:13px;border:1px solid #44587a;box-sizing:border-box;background:#f0f0f0"></div>
<div class="t" style="left:480px;top:208px">Synchronize All Devices</div>
<div class="a" style="left:464px;top:238px;width:370px;height:185px;border:1px solid #86a5c8;box-sizing:border-box;background:#ededf1"></div>
<div class="a" style="left:467px;top:241px;width:348px;height:179px;background:#fff"></div>
<div class="a" style="left:815px;top:241px;width:16px;height:179px;background:#e3e3e3"></div>
<div class="a" style="left:820px;top:258px;width:5px;height:144px;background:#c9c9c9"></div>
<div class="a" style="left:820px;top:264px;width:5px;height:76px;background:#f86c00"></div>
<svg style="left:818px;top:246px" width="10" height="7" viewBox="0 0 10 7"><path d="M1 5.5L5 1.5L9 5.5" fill="none" stroke="#8c8c8c" stroke-width="1.6"/></svg>
<svg style="left:818px;top:408px" width="10" height="7" viewBox="0 0 10 7"><path d="M1 1.5L5 5.5L9 1.5" fill="none" stroke="#8c8c8c" stroke-width="1.6"/></svg>
<div class="a" style="left:487px;top:241px;width:16px;height:2px;background:#4a4a4a;border-radius:0 0 2px 2px"></div>
<div class="a" style="left:562px;top:241px;width:1.5px;height:3px;background:#333;transform:skewX(-20deg)"></div>
<div class="vl" style="left:494px;top:244px;height:4px"></div>
<div class="hl" style="top:252px;left:499px;width:7px"></div>
<div class="tc" style="left:490px;top:247px"></div>
<svg style="left:490px;top:247px" width="9" height="10" viewBox="0 0 9 10"><path d="M1.3 7.5H7.1V2.1Z" fill="#3e3e3e"/></svg>
<svg style="left:507px;top:245px" width="16" height="16" viewBox="0 0 16 16"><path d="M0.8 9.4V0.9Q0.8 0 1.7 0H5.8Q6.6 0 7.2 0.8L7.8 1.6H14.4Q15.4 1.6 15.4 2.6V9.4Q15.4 10.4 14.4 10.4H1.8Q0.8 10.4 0.8 9.4Z" transform="translate(0,2.1)" fill="#fff" stroke="#444" stroke-width="1.3"/><rect x="5.7" y="5.3" width="5" height="3.6" fill="#fff" stroke="#333" stroke-width="1"/><path d="M4 10.3H12.2" stroke="#333" stroke-width="1.3"/></svg>
<div class="vl" style="left:514px;top:260px;height:160px"></div>
<div class="hl" style="top:268px;left:515px;width:12px"></div>
<svg style="left:527px;top:262px" width="16" height="16" viewBox="0 1 16 16"><path d="M3.6 2.6V1.5H14.6V9H13" fill="none" stroke="#8c8c8c" stroke-width="1"/><rect x="1.2" y="3.2" width="10.9" height="7.9" rx="0.8" fill="#fff" stroke="#444" stroke-width="1.15"/><rect x="4.9" y="12.4" width="3.6" height="1.5" fill="#2a2a2a"/></svg>
<div class="hl" style="top:284px;left:519px;width:8px"></div>
<div class="tc" style="left:510px;top:279px"></div>
<svg style="left:510px;top:279px" width="9" height="10" viewBox="0 0 9 10"><path d="M1.3 7.5H7.1V2.1Z" fill="#3e3e3e"/></svg>
<svg style="left:527px;top:278px" width="16" height="16" viewBox="0 1 16 16"><path d="M3.6 2.6V1.5H14.6V9H13" fill="none" stroke="#8c8c8c" stroke-width="1"/><rect x="1.2" y="3.2" width="10.9" height="7.9" rx="0.8" fill="#fff" stroke="#444" stroke-width="1.15"/><rect x="4.9" y="12.4" width="3.6" height="1.5" fill="#2a2a2a"/></svg>
<div class="vl" style="left:534px;top:292px;height:128px"></div>
<div class="t" style="left:527px;top:244px;letter-spacing:-0.3px">bcmbeta</div>
<div class="t" style="left:547px;top:260px;letter-spacing:-0.3px">BCM_USer_Group</div>
<div class="a" style="left:546px;top:276px;width:74px;height:16px;background:#fff4c4;border:1px solid #3a3a3a;box-sizing:border-box"></div>
<div class="t" style="left:547px;top:276px;letter-spacing:-0.17px">Computers</div>
<div class="hl" style="top:300px;left:535px;width:11px"></div>
<svg style="left:547px;top:292px" width="16" height="16" viewBox="0 0 16 16"><rect x="0.8" y="0.8" width="14.4" height="10.8" rx="0.5" fill="#fff" stroke="#444" stroke-width="1.2"/><path d="M6.2 12.4H9.8L10.7 14.7H5.3Z" fill="#2a2a2a"/></svg>
<div class="t" style="left:567px;top:292px;letter-spacing:-0.5px">CLM-PUN-003305</div>
<div class="hl" style="top:316px;left:535px;width:11px"></div>
<svg style="left:547px;top:308px" width="16" height="16" viewBox="0 0 16 16"><rect x="0.8" y="0.8" width="14.4" height="10.8" rx="0.5" fill="#fff" stroke="#444" stroke-width="1.2"/><path d="M6.2 12.4H9.8L10.7 14.7H5.3Z" fill="#2a2a2a"/></svg>
<div class="t" style="left:567px;top:308px;letter-spacing:-0.5px">CLM-PUN-032562</div>
<div class="hl" style="top:332px;left:535px;width:11px"></div>
<svg style="left:547px;top:324px" width="16" height="16" viewBox="0 0 16 16"><rect x="0.8" y="0.8" width="14.4" height="10.8" rx="0.5" fill="#fff" stroke="#444" stroke-width="1.2"/><path d="M6.2 12.4H9.8L10.7 14.7H5.3Z" fill="#2a2a2a"/></svg>
<div class="t" style="left:567px;top:324px;letter-spacing:-0.5px">CLM-PUN-033303</div>
<div class="hl" style="top:348px;left:535px;width:11px"></div>
<svg style="left:547px;top:340px" width="16" height="16" viewBox="0 0 16 16"><rect x="0.8" y="0.8" width="14.4" height="10.8" rx="0.5" fill="#fff" stroke="#444" stroke-width="1.2"/><path d="M6.2 12.4H9.8L10.7 14.7H5.3Z" fill="#2a2a2a"/></svg>
<div class="t" style="left:567px;top:340px;letter-spacing:-0.5px">CLM-PUN-033304</div>
<div class="hl" style="top:364px;left:535px;width:11px"></div>
<svg style="left:547px;top:356px" width="16" height="16" viewBox="0 0 16 16"><rect x="0.8" y="0.8" width="14.4" height="10.8" rx="0.5" fill="#fff" stroke="#444" stroke-width="1.2"/><path d="M6.2 12.4H9.8L10.7 14.7H5.3Z" fill="#2a2a2a"/></svg>
<div class="t" style="left:567px;top:356px;letter-spacing:-0.5px">CLM-PUN-033306</div>
<div class="hl" style="top:380px;left:535px;width:11px"></div>
<svg style="left:547px;top:372px" width="16" height="16" viewBox="0 0 16 16"><rect x="0.8" y="0.8" width="14.4" height="10.8" rx="0.5" fill="#fff" stroke="#444" stroke-width="1.2"/><path d="M6.2 12.4H9.8L10.7 14.7H5.3Z" fill="#2a2a2a"/></svg>
<div class="t" style="left:567px;top:372px;letter-spacing:-0.5px">CLM-PUN-033307</div>
<div class="hl" style="top:396px;left:535px;width:11px"></div>
<svg style="left:547px;top:388px" width="16" height="16" viewBox="0 0 16 16"><rect x="0.8" y="0.8" width="14.4" height="10.8" rx="0.5" fill="#fff" stroke="#444" stroke-width="1.2"/><path d="M6.2 12.4H9.8L10.7 14.7H5.3Z" fill="#2a2a2a"/></svg>
<div class="t" style="left:567px;top:388px;letter-spacing:-0.5px">CLM-PUN-033433</div>
<div class="hl" style="top:412px;left:535px;width:11px"></div>
<svg style="left:547px;top:404px" width="16" height="16" viewBox="0 0 16 16"><rect x="0.8" y="0.8" width="14.4" height="10.8" rx="0.5" fill="#fff" stroke="#444" stroke-width="1.2"/><path d="M6.2 12.4H9.8L10.7 14.7H5.3Z" fill="#2a2a2a"/></svg>
<div class="t" style="left:567px;top:404px;letter-spacing:-0.5px">CLM-PUN-033434</div>
<div class="a" style="left:465px;top:420px;width:368px;height:2px;background:#ededf1"></div>
<div class="a" style="left:708px;top:440px;width:54px;height:25px;border:1px solid #f5c26a;background:linear-gradient(#fff1c4,#ffd983);font-family:'Liberation Sans',sans-serif;font-weight:bold;font-size:13.5px;line-height:23px;text-align:center;color:#111;box-sizing:border-box">OK</div>
<div class="a" style="left:768px;top:440px;width:78px;height:25px;border:1px solid #d3d3d7;background:#ebebef;font-family:'Liberation Sans',sans-serif;font-weight:bold;font-size:13.5px;line-height:23px;text-align:center;color:#111;box-sizing:border-box">Cancel</div>
<svg style="left:660px;top:444px" width="40" height="24" viewBox="0 0 40 24"><g style="filter:drop-shadow(2px 3px 1.6px rgba(0,0,0,0.6))"><path d="M3.6 10.2H22V4.4L37 11.4L22 18.6V12.8H3.6Z" fill="#b5121b"/></g></svg>
</div></body></html>
